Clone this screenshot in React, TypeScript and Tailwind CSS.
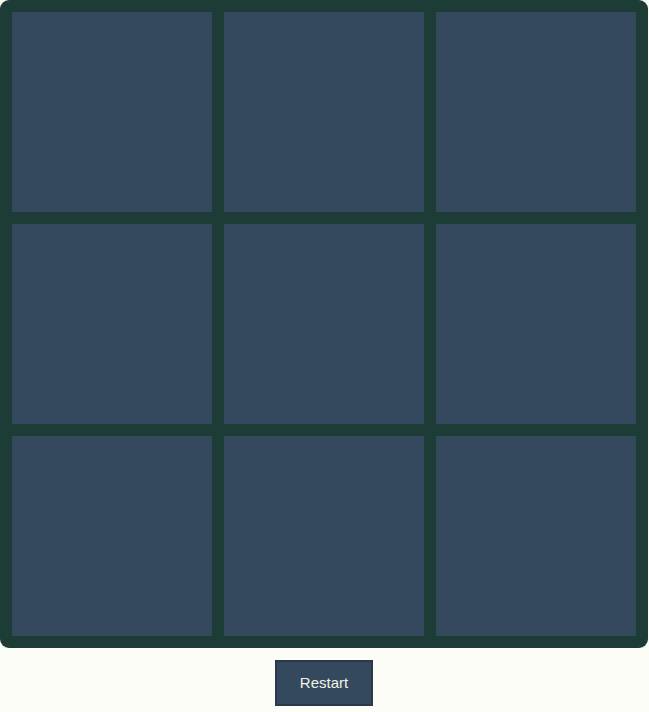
import { useState } from "react";

export default function App() {
  const [cells, setCells] = useState<(string | null)[]>(Array(9).fill(null));

  return (
    <div className="min-h-screen bg-[#fdfdf8] flex flex-col items-start font-['Liberation_Sans',Arial,sans-serif]">
      {/* Board */}
      <div className="grid grid-cols-[repeat(3,200px)] grid-rows-[repeat(3,200px)] gap-[12px] p-[12px] bg-[#1d3c35] rounded-[9px] w-[648px] h-[648px]">
        {cells.map((c, i) => (
          <div
            key={i}
            onClick={() => setCells(cells.map((v, j) => (j === i && !v ? "X" : v)))}
            className="bg-[#34495e] flex items-center justify-center text-6xl text-white"
          >
            {c}
          </div>
        ))}
      </div>
      <div className="w-[648px] flex justify-center mt-[12px]">
        <button
          onClick={() => setCells(Array(9).fill(null))}
          className="w-[98px] h-[46px] bg-[#34495e] border-2 border-[#2a3848] text-[#f2f2e6] text-[15px]"
        >
          Restart
        </button>
      </div>
    </div>
  );
}
